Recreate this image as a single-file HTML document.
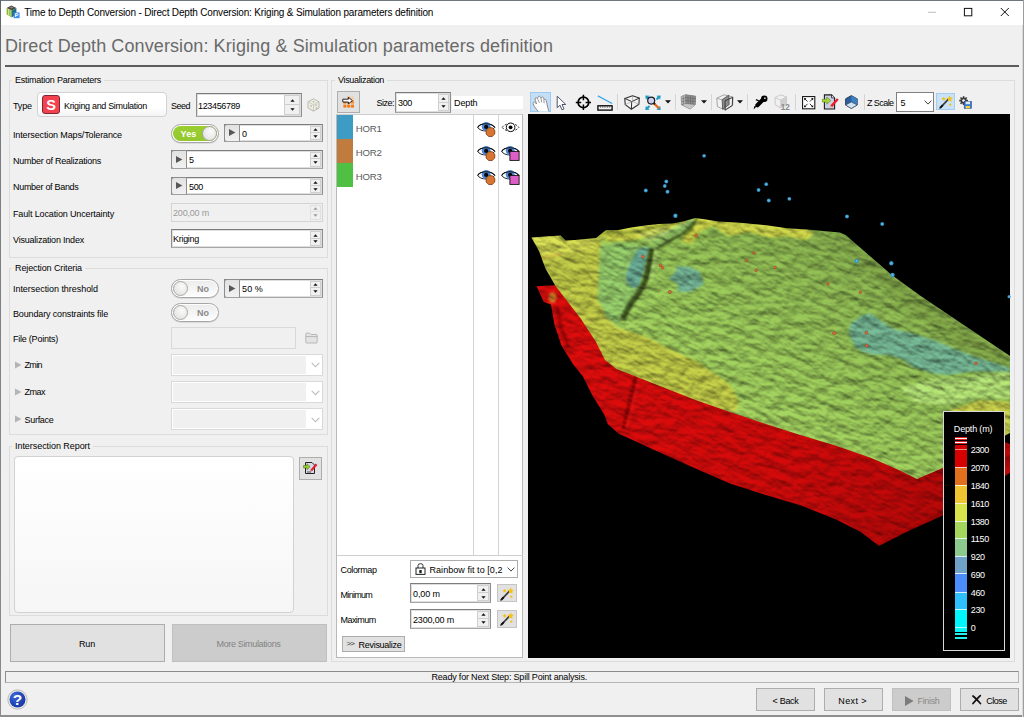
<!DOCTYPE html>
<html lang="en"><head><meta charset="utf-8"><title>Time to Depth Conversion</title>
<style>
html,body{margin:0;padding:0;}
body{width:1024px;height:717px;position:relative;overflow:hidden;background:#f0f0f0;font-family:"Liberation Sans",sans-serif;font-size:11px;}
.t{position:absolute;white-space:nowrap;}
.a{position:absolute;display:block;overflow:visible;}
</style></head><body>
<div style="position:absolute;left:0px;top:0px;width:1024px;height:717px;box-sizing:border-box;background:#f0f0f0;"></div>
<div style="position:absolute;left:0px;top:0px;width:1024px;height:25px;box-sizing:border-box;background:#fff;"></div>
<div style="position:absolute;left:0px;top:0px;width:1024px;height:1px;box-sizing:border-box;background:#6e7780;"></div>
<div style="position:absolute;left:0px;top:0px;width:1px;height:717px;box-sizing:border-box;background:linear-gradient(#5f6468,#7a7e82 20%,#8a8a8a);"></div>
<div style="position:absolute;left:0px;top:715.4px;width:1024px;height:1.6px;box-sizing:border-box;background:#8e8e8e;"></div>
<div style="position:absolute;left:1022px;top:25px;width:1px;height:692px;box-sizing:border-box;background:#dadada;"></div>
<div style="position:absolute;left:1023px;top:0px;width:1px;height:717px;box-sizing:border-box;background:#9a9ea2;"></div>
<svg class="a" style="left:6.3px;top:5px" width="14" height="14" viewBox="0 0 14 14">
<polygon points="0.6,3 5.4,0.4 10.4,3 5.6,5.4" fill="#4b4641"/><polygon points="3.4,2.6 5.6,1.4 7.6,2.6 5.6,3.6" fill="#8a8680"/>
<polygon points="0.6,3 5.6,5.4 5.6,12.4 0.6,9.6" fill="#8ebb2e"/><polygon points="2.2,3.8 3.2,4.3 3.2,11 2.2,10.5" fill="#dfe8c8"/><polygon points="4,4.7 4.8,5.1 4.8,11.9 4,11.5" fill="#b7d65a"/>
<polygon points="5.6,5.4 10.4,3 10.4,9.6 5.6,12.4" fill="#1f6f7f"/>
<rect x="7.6" y="7.4" width="6" height="5.8" fill="#3c8cf2"/><path d="M9.6 12v-3.4h1.6q0.9 0 0.9 0.9t-0.9 0.9h-1.6" stroke="#fff" stroke-width="0.9" fill="none"/></svg>
<span class="t" style="left:24.2px;top:6.2px;font-size:10px;line-height:13px;color:#000;letter-spacing:-0.174px;">Time to Depth Conversion - Direct Depth Conversion: Kriging &amp; Simulation parameters definition</span>
<svg class="a" style="left:920px;top:0" width="104" height="25" viewBox="0 0 104 25">
<path d="M8 12.3h8" stroke="#bdbdbd" stroke-width="1" fill="none"/>
<rect x="44.4" y="8.4" width="7.4" height="7.4" stroke="#111" stroke-width="1" fill="none"/>
<path d="M80.8 8l8 8M88.8 8l-8 8" stroke="#111" stroke-width="1" fill="none"/></svg>
<span class="t" style="left:5px;top:35.0px;font-size:18px;line-height:22px;color:#6a6a6a;letter-spacing:0.101px;">Direct Depth Conversion: Kriging &amp; Simulation parameters definition</span>
<div style="position:absolute;left:5px;top:65px;width:1014px;height:2px;box-sizing:border-box;background:#5c5c5c;"></div>
<div style="position:absolute;left:9px;top:80px;width:319px;height:178px;box-sizing:border-box;border:1px solid #dcdcdc;"></div><div style="position:absolute;left:12px;top:78px;width:92px;height:5px;box-sizing:border-box;background:#f0f0f0;"></div><span class="t" style="left:15px;top:74.3px;font-size:9px;line-height:12px;color:#000;letter-spacing:-0.240px;">Estimation Parameters</span>
<div style="position:absolute;left:9px;top:268px;width:319px;height:167px;box-sizing:border-box;border:1px solid #dcdcdc;"></div><div style="position:absolute;left:12px;top:266px;width:73px;height:5px;box-sizing:border-box;background:#f0f0f0;"></div><span class="t" style="left:15px;top:262.3px;font-size:9px;line-height:12px;color:#000;letter-spacing:-0.113px;">Rejection Criteria</span>
<div style="position:absolute;left:9px;top:446px;width:319px;height:170px;box-sizing:border-box;border:1px solid #dcdcdc;"></div><div style="position:absolute;left:12px;top:444px;width:81px;height:5px;box-sizing:border-box;background:#f0f0f0;"></div><span class="t" style="left:15px;top:440.3px;font-size:9px;line-height:12px;color:#000;letter-spacing:-0.055px;">Intersection Report</span>
<div style="position:absolute;left:331px;top:80px;width:684px;height:582px;box-sizing:border-box;border:1px solid #dcdcdc;"></div><div style="position:absolute;left:335px;top:78px;width:52px;height:5px;box-sizing:border-box;background:#f0f0f0;"></div><span class="t" style="left:338px;top:74.3px;font-size:9px;line-height:12px;color:#000;letter-spacing:-0.337px;">Visualization</span>
<span class="t" style="left:13px;top:99.5px;font-size:9px;line-height:12px;color:#000;letter-spacing:-0.129px;">Type</span>
<span class="t" style="left:13px;top:128.5px;font-size:9px;line-height:12px;color:#000;letter-spacing:-0.132px;">Intersection Maps/Tolerance</span>
<span class="t" style="left:13px;top:154.8px;font-size:9px;line-height:12px;color:#000;letter-spacing:-0.252px;">Number of Realizations</span>
<span class="t" style="left:13px;top:181.1px;font-size:9px;line-height:12px;color:#000;letter-spacing:-0.303px;">Number of Bands</span>
<span class="t" style="left:13px;top:207.5px;font-size:9px;line-height:12px;color:#000;letter-spacing:-0.137px;">Fault Location Uncertainty</span>
<span class="t" style="left:13px;top:233.8px;font-size:9px;line-height:12px;color:#000;letter-spacing:-0.205px;">Visualization Index</span>
<span class="t" style="left:13px;top:283.3px;font-size:9px;line-height:12px;color:#000;letter-spacing:-0.048px;">Intersection threshold</span>
<span class="t" style="left:13px;top:307.7px;font-size:9px;line-height:12px;color:#000;letter-spacing:-0.142px;">Boundary constraints file</span>
<span class="t" style="left:13px;top:333.0px;font-size:9px;line-height:12px;color:#000;letter-spacing:-0.232px;">File (Points)</span>
<svg class="a" style="left:15px;top:360.8px" width="7" height="8" viewBox="0 0 7 8"><polygon points="0,0.5 6.5,4 0,7.5" fill="#b4b4b4"/></svg>
<span class="t" style="left:24.5px;top:359.3px;font-size:9px;line-height:12px;color:#000;letter-spacing:-0.625px;">Zmin</span>
<svg class="a" style="left:15px;top:387.6px" width="7" height="8" viewBox="0 0 7 8"><polygon points="0,0.5 6.5,4 0,7.5" fill="#b4b4b4"/></svg>
<span class="t" style="left:24.5px;top:386.1px;font-size:9px;line-height:12px;color:#000;letter-spacing:-0.500px;">Zmax</span>
<svg class="a" style="left:15px;top:415.2px" width="7" height="8" viewBox="0 0 7 8"><polygon points="0,0.5 6.5,4 0,7.5" fill="#b4b4b4"/></svg>
<span class="t" style="left:24.5px;top:413.7px;font-size:9px;line-height:12px;color:#000;letter-spacing:-0.290px;">Surface</span>
<div style="position:absolute;left:37.4px;top:92.4px;width:129.4px;height:24.2px;box-sizing:border-box;background:linear-gradient(#fff 60%,#f4f4f4);border:1.4px solid #d2d2d2;border-radius:4px;"></div>
<div style="position:absolute;left:42px;top:95.3px;width:18.2px;height:18.3px;box-sizing:border-box;background:#f4414f;border:1px solid #7c2634;border-radius:3px;"></div>
<span class="t" style="left:46.2px;top:96.9px;font-size:14.5px;line-height:16px;color:#fff;letter-spacing:-0.272px;font-weight:bold;">S</span>
<span class="t" style="left:64px;top:99.5px;font-size:9px;line-height:12px;color:#000;letter-spacing:-0.321px;">Kriging and Simulation</span>
<span class="t" style="left:171px;top:99.5px;font-size:9px;line-height:12px;color:#000;letter-spacing:-0.508px;">Seed</span>
<div style="position:absolute;left:196px;top:93px;width:106px;height:23.5px;box-sizing:border-box;background:#fff;border:1px solid #8e8e8e;border-top-color:#7c7c7c;border-bottom-color:#a8a8a8;box-shadow:inset 0 0 0 1px #dedede;"></div><div style="position:absolute;left:284px;top:95px;width:16px;height:9.75px;box-sizing:border-box;background:#f0f0f0;border:1px solid #cfcfcf;"></div><div style="position:absolute;left:284px;top:104.75px;width:16px;height:9.75px;box-sizing:border-box;background:#f0f0f0;border:1px solid #cfcfcf;border-top:none;"></div><svg class="a" style="left:289.5px;top:98.5px" width="5" height="3.2" viewBox="0 0 6 4"><polygon points="0.3,3.6 3,0.4 5.7,3.6" fill="#111"/></svg><svg class="a" style="left:289.5px;top:107.8px" width="5" height="3.2" viewBox="0 0 6 4"><polygon points="0.3,0.4 3,3.6 5.7,0.4" fill="#111"/></svg><span class="t" style="left:198px;top:99.5px;font-size:9px;line-height:12px;color:#000;letter-spacing:-0.340px;">123456789</span>
<div style="position:absolute;left:224px;top:124px;width:99px;height:18px;box-sizing:border-box;background:#fff;border:1px solid #8e8e8e;border-top-color:#7c7c7c;border-bottom-color:#a8a8a8;box-shadow:inset 0 0 0 1px #dedede;"></div><div style="position:absolute;left:224px;top:124px;width:16px;height:18px;box-sizing:border-box;background:linear-gradient(#e2e2e2,#f1f1f1);border:1px solid #8e8e8e;border-radius:3px 0 0 3px;border-bottom-color:#a0a0a0;"></div><svg class="a" style="left:228.8px;top:129.4px" width="7" height="7" viewBox="0 0 7 7"><polygon points="0,0 6.4,3.5 0,7" fill="#565656"/></svg><div style="position:absolute;left:310px;top:126px;width:11px;height:7.0px;box-sizing:border-box;background:#f0f0f0;border:1px solid #cfcfcf;"></div><div style="position:absolute;left:310px;top:133.0px;width:11px;height:7.0px;box-sizing:border-box;background:#f0f0f0;border:1px solid #cfcfcf;border-top:none;"></div><svg class="a" style="left:313.0px;top:128.1px" width="5" height="3.2" viewBox="0 0 6 4"><polygon points="0.3,3.6 3,0.4 5.7,3.6" fill="#111"/></svg><svg class="a" style="left:313.0px;top:134.7px" width="5" height="3.2" viewBox="0 0 6 4"><polygon points="0.3,0.4 3,3.6 5.7,0.4" fill="#111"/></svg><span class="t" style="left:242px;top:127.8px;font-size:9px;line-height:12px;color:#000;letter-spacing:0.000px;">0</span>
<div style="position:absolute;left:171px;top:150px;width:152px;height:18.6px;box-sizing:border-box;background:#fff;border:1px solid #8e8e8e;border-top-color:#7c7c7c;border-bottom-color:#a8a8a8;box-shadow:inset 0 0 0 1px #dedede;"></div><div style="position:absolute;left:171px;top:150px;width:16px;height:18.6px;box-sizing:border-box;background:linear-gradient(#e2e2e2,#f1f1f1);border:1px solid #8e8e8e;border-radius:3px 0 0 3px;border-bottom-color:#a0a0a0;"></div><svg class="a" style="left:175.8px;top:155.7px" width="7" height="7" viewBox="0 0 7 7"><polygon points="0,0 6.4,3.5 0,7" fill="#565656"/></svg><div style="position:absolute;left:310px;top:152px;width:11px;height:7.300000000000001px;box-sizing:border-box;background:#f0f0f0;border:1px solid #cfcfcf;"></div><div style="position:absolute;left:310px;top:159.3px;width:11px;height:7.300000000000001px;box-sizing:border-box;background:#f0f0f0;border:1px solid #cfcfcf;border-top:none;"></div><svg class="a" style="left:313.0px;top:154.2px" width="5" height="3.2" viewBox="0 0 6 4"><polygon points="0.3,3.6 3,0.4 5.7,3.6" fill="#111"/></svg><svg class="a" style="left:313.0px;top:161.1px" width="5" height="3.2" viewBox="0 0 6 4"><polygon points="0.3,0.4 3,3.6 5.7,0.4" fill="#111"/></svg><span class="t" style="left:189px;top:154.1px;font-size:9px;line-height:12px;color:#000;letter-spacing:0.000px;">5</span>
<div style="position:absolute;left:171px;top:176.6px;width:152px;height:18.6px;box-sizing:border-box;background:#fff;border:1px solid #8e8e8e;border-top-color:#7c7c7c;border-bottom-color:#a8a8a8;box-shadow:inset 0 0 0 1px #dedede;"></div><div style="position:absolute;left:171px;top:176.6px;width:16px;height:18.6px;box-sizing:border-box;background:linear-gradient(#e2e2e2,#f1f1f1);border:1px solid #8e8e8e;border-radius:3px 0 0 3px;border-bottom-color:#a0a0a0;"></div><svg class="a" style="left:175.8px;top:182.3px" width="7" height="7" viewBox="0 0 7 7"><polygon points="0,0 6.4,3.5 0,7" fill="#565656"/></svg><div style="position:absolute;left:310px;top:178.6px;width:11px;height:7.300000000000001px;box-sizing:border-box;background:#f0f0f0;border:1px solid #cfcfcf;"></div><div style="position:absolute;left:310px;top:185.9px;width:11px;height:7.300000000000001px;box-sizing:border-box;background:#f0f0f0;border:1px solid #cfcfcf;border-top:none;"></div><svg class="a" style="left:313.0px;top:180.8px" width="5" height="3.2" viewBox="0 0 6 4"><polygon points="0.3,3.6 3,0.4 5.7,3.6" fill="#111"/></svg><svg class="a" style="left:313.0px;top:187.7px" width="5" height="3.2" viewBox="0 0 6 4"><polygon points="0.3,0.4 3,3.6 5.7,0.4" fill="#111"/></svg><span class="t" style="left:189px;top:180.7px;font-size:9px;line-height:12px;color:#000;letter-spacing:-0.344px;">500</span>
<div style="position:absolute;left:171px;top:203px;width:152px;height:18.6px;box-sizing:border-box;background:#f0f0f0;border:1px solid #d4d4d4;"></div><div style="position:absolute;left:310px;top:205px;width:11px;height:7.300000000000001px;box-sizing:border-box;background:#f0f0f0;border:1px solid #e0e0e0;"></div><div style="position:absolute;left:310px;top:212.3px;width:11px;height:7.300000000000001px;box-sizing:border-box;background:#f0f0f0;border:1px solid #e0e0e0;border-top:none;"></div><svg class="a" style="left:313.0px;top:207.2px" width="5" height="3.2" viewBox="0 0 6 4"><polygon points="0.3,3.6 3,0.4 5.7,3.6" fill="#9a9a9a"/></svg><svg class="a" style="left:313.0px;top:214.1px" width="5" height="3.2" viewBox="0 0 6 4"><polygon points="0.3,0.4 3,3.6 5.7,0.4" fill="#9a9a9a"/></svg><span class="t" style="left:173px;top:207.1px;font-size:9px;line-height:12px;color:#9a9a9a;letter-spacing:-0.191px;">200,00 m</span>
<div style="position:absolute;left:171px;top:229.3px;width:152px;height:18.6px;box-sizing:border-box;background:#fff;border:1px solid #8e8e8e;border-top-color:#7c7c7c;border-bottom-color:#a8a8a8;box-shadow:inset 0 0 0 1px #dedede;"></div><div style="position:absolute;left:310px;top:231.3px;width:11px;height:7.300000000000001px;box-sizing:border-box;background:#f0f0f0;border:1px solid #cfcfcf;"></div><div style="position:absolute;left:310px;top:238.60000000000002px;width:11px;height:7.300000000000001px;box-sizing:border-box;background:#f0f0f0;border:1px solid #cfcfcf;border-top:none;"></div><svg class="a" style="left:313.0px;top:233.6px" width="5" height="3.2" viewBox="0 0 6 4"><polygon points="0.3,3.6 3,0.4 5.7,3.6" fill="#111"/></svg><svg class="a" style="left:313.0px;top:240.4px" width="5" height="3.2" viewBox="0 0 6 4"><polygon points="0.3,0.4 3,3.6 5.7,0.4" fill="#111"/></svg><span class="t" style="left:173px;top:233.4px;font-size:9px;line-height:12px;color:#000;letter-spacing:-0.288px;">Kriging</span>
<div style="position:absolute;left:224px;top:279px;width:99px;height:18.6px;box-sizing:border-box;background:#fff;border:1px solid #8e8e8e;border-top-color:#7c7c7c;border-bottom-color:#a8a8a8;box-shadow:inset 0 0 0 1px #dedede;"></div><div style="position:absolute;left:224px;top:279px;width:16px;height:18.6px;box-sizing:border-box;background:linear-gradient(#e2e2e2,#f1f1f1);border:1px solid #8e8e8e;border-radius:3px 0 0 3px;border-bottom-color:#a0a0a0;"></div><svg class="a" style="left:228.8px;top:284.7px" width="7" height="7" viewBox="0 0 7 7"><polygon points="0,0 6.4,3.5 0,7" fill="#565656"/></svg><div style="position:absolute;left:310px;top:281px;width:11px;height:7.300000000000001px;box-sizing:border-box;background:#f0f0f0;border:1px solid #cfcfcf;"></div><div style="position:absolute;left:310px;top:288.3px;width:11px;height:7.300000000000001px;box-sizing:border-box;background:#f0f0f0;border:1px solid #cfcfcf;border-top:none;"></div><svg class="a" style="left:313.0px;top:283.2px" width="5" height="3.2" viewBox="0 0 6 4"><polygon points="0.3,3.6 3,0.4 5.7,3.6" fill="#111"/></svg><svg class="a" style="left:313.0px;top:290.1px" width="5" height="3.2" viewBox="0 0 6 4"><polygon points="0.3,0.4 3,3.6 5.7,0.4" fill="#111"/></svg><span class="t" style="left:242px;top:283.1px;font-size:9px;line-height:12px;color:#000;letter-spacing:0.121px;">50 %</span>
<svg class="a" style="left:307px;top:97.5px" width="13" height="14" viewBox="0 0 13 14">
<polygon points="6.5,0.8 12,3.8 12,10 6.5,13.2 1,10 1,3.8" fill="#ecece0" stroke="#b9b9b0" stroke-width="1"/>
<path d="M6.5 6.8V13M1 3.8l5.5 3 5.5-3" stroke="#c4c4ba" fill="none" stroke-width="0.8"/>
<circle cx="4" cy="8" r="0.8" fill="#aaa"/><circle cx="9" cy="7" r="0.8" fill="#aaa"/><circle cx="9.5" cy="10" r="0.8" fill="#aaa"/><circle cx="6.5" cy="3.8" r="0.8" fill="#aaa"/></svg>
<div style="position:absolute;left:171px;top:123.7px;width:48px;height:19px;box-sizing:border-box;border-radius:10px;border:1px solid #a6a6a6;background:#fff;box-shadow:0 1px 0 #dcdcdc;"></div><div style="position:absolute;left:173px;top:125.7px;width:44px;height:15px;box-sizing:border-box;border-radius:8px;background:linear-gradient(#9bcf30,#94c72e);"></div><div style="position:absolute;left:201.5px;top:125.7px;width:15.4px;height:15.4px;box-sizing:border-box;border-radius:50%;border:1px solid #a9a9a0;background:radial-gradient(circle at 60% 35%,#fbfbfb,#dcdcdc);"></div><span class="t" style="left:180.5px;top:127.9px;font-size:9px;line-height:12px;color:#fff;letter-spacing:0.156px;font-weight:bold;">Yes</span>
<div style="position:absolute;left:171px;top:278.7px;width:48px;height:19px;box-sizing:border-box;border-radius:10px;border:1px solid #a6a6a6;background:#fff;box-shadow:0 1px 0 #dcdcdc;"></div><div style="position:absolute;left:173px;top:280.7px;width:44px;height:15px;box-sizing:border-box;border-radius:8px;background:linear-gradient(#ececec,#fdfdfd);"></div><div style="position:absolute;left:173px;top:280.7px;width:15.4px;height:15.4px;box-sizing:border-box;border-radius:50%;border:1px solid #a9a9a0;background:radial-gradient(circle at 60% 35%,#fbfbfb,#dcdcdc);"></div><span class="t" style="left:197px;top:282.9px;font-size:9px;line-height:12px;color:#8a8a8a;letter-spacing:0.000px;font-weight:bold;">No</span>
<div style="position:absolute;left:171px;top:302.7px;width:48px;height:19px;box-sizing:border-box;border-radius:10px;border:1px solid #a6a6a6;background:#fff;box-shadow:0 1px 0 #dcdcdc;"></div><div style="position:absolute;left:173px;top:304.7px;width:44px;height:15px;box-sizing:border-box;border-radius:8px;background:linear-gradient(#ececec,#fdfdfd);"></div><div style="position:absolute;left:173px;top:304.7px;width:15.4px;height:15.4px;box-sizing:border-box;border-radius:50%;border:1px solid #a9a9a0;background:radial-gradient(circle at 60% 35%,#fbfbfb,#dcdcdc);"></div><span class="t" style="left:197px;top:306.9px;font-size:9px;line-height:12px;color:#8a8a8a;letter-spacing:0.000px;font-weight:bold;">No</span>
<div style="position:absolute;left:171px;top:326.5px;width:125px;height:22.5px;box-sizing:border-box;background:#f0f0f0;border:1px solid #d9d9d9;"></div>
<svg class="a" style="left:305px;top:332px" width="13" height="12" viewBox="0 0 13 12">
<path d="M0.8 2.2q0-1 1-1h3l1.2 1.3h5.2q1 0 1 1V10q0 1-1 1H1.8q-1 0-1-1z" fill="#e4e4e4" stroke="#b0b0b0" stroke-width="0.9"/>
<path d="M0.8 4.6h11.4" stroke="#b0b0b0" stroke-width="0.9"/></svg>
<div style="position:absolute;left:171px;top:353.6px;width:152px;height:22.6px;box-sizing:border-box;background:#fff;border:1px solid #d9d9d9;"></div><div style="position:absolute;left:173px;top:355.6px;width:133px;height:18.6px;box-sizing:border-box;background:#f0f0f0;"></div><svg class="a" style="left:311px;top:362.4px" width="9" height="6" viewBox="0 0 9 6"><path d="M0.7 0.8l3.8 3.9 3.8-3.9" stroke="#bdbdbd" stroke-width="1.1" fill="none"/></svg>
<div style="position:absolute;left:171px;top:380.8px;width:152px;height:22.4px;box-sizing:border-box;background:#fff;border:1px solid #d9d9d9;"></div><div style="position:absolute;left:173px;top:382.8px;width:133px;height:18.4px;box-sizing:border-box;background:#f0f0f0;"></div><svg class="a" style="left:311px;top:389.5px" width="9" height="6" viewBox="0 0 9 6"><path d="M0.7 0.8l3.8 3.9 3.8-3.9" stroke="#bdbdbd" stroke-width="1.1" fill="none"/></svg>
<div style="position:absolute;left:171px;top:408px;width:152px;height:22.4px;box-sizing:border-box;background:#fff;border:1px solid #d9d9d9;"></div><div style="position:absolute;left:173px;top:410px;width:133px;height:18.4px;box-sizing:border-box;background:#f0f0f0;"></div><svg class="a" style="left:311px;top:416.7px" width="9" height="6" viewBox="0 0 9 6"><path d="M0.7 0.8l3.8 3.9 3.8-3.9" stroke="#bdbdbd" stroke-width="1.1" fill="none"/></svg>
<div style="position:absolute;left:14px;top:456px;width:280px;height:157px;box-sizing:border-box;border:1px solid #d2d2d2;border-radius:4px;background:linear-gradient(#ffffff,#f6f6f6);"></div>
<div style="position:absolute;left:299px;top:456.5px;width:23px;height:23px;box-sizing:border-box;background:#e1e1e1;border:1px solid #adadad;"></div>
<svg class="a" style="left:303px;top:460px" width="16" height="16" viewBox="0 0 16 16">
<path d="M2.5 2.5h6.5l2.5 2.5v8.5h-9z" fill="#d8d8ee" stroke="#222" stroke-width="1"/>
<path d="M0.5 5.5h3.5v-1.8l3.2 3-3.2 3v-1.8h-3.5z" fill="#9acd32" stroke="#4d7a10" stroke-width="0.6"/>
<path d="M13.6 4.2l-5.6 6.6" stroke="#e3202c" stroke-width="2.1"/><path d="M7.4 11.6l0.9-1.3 0.7 0.6z" fill="#f0b000"/>
<path d="M4 12h4" stroke="#333" stroke-width="0.8"/></svg>
<div style="position:absolute;left:10px;top:624px;width:155px;height:37.5px;box-sizing:border-box;background:#e1e1e1;border:1px solid #adadad;"></div>
<span class="t" style="left:79px;top:637.7px;font-size:9px;line-height:12px;color:#000;letter-spacing:-0.172px;">Run</span>
<div style="position:absolute;left:172px;top:624px;width:155px;height:37.5px;box-sizing:border-box;background:#cccccc;border:1px solid #bfbfbf;"></div>
<span class="t" style="left:216.5px;top:637.7px;font-size:9px;line-height:12px;color:#838383;letter-spacing:-0.346px;">More Simulations</span>
<div style="position:absolute;left:5px;top:671px;width:1014px;height:11.5px;box-sizing:border-box;background:#f0f0f0;border:1px solid #8c8c8c;border-bottom-color:#b5b5b5;border-right-color:#b5b5b5;"></div>
<span class="t" style="left:431.5px;top:671.0px;font-size:9px;line-height:12px;color:#000;letter-spacing:-0.192px;">Ready for Next Step: Spill Point analysis.</span>
<svg class="a" style="left:6.5px;top:688.8px" width="21" height="21" viewBox="0 0 21 21">
<defs><radialGradient id="hg" cx="0.35" cy="0.3" r="0.85"><stop offset="0" stop-color="#3f68d8"/><stop offset="0.6" stop-color="#1f45b4"/><stop offset="1" stop-color="#17389c"/></radialGradient></defs>
<circle cx="10.5" cy="10.5" r="9.7" fill="#e9e9e9" stroke="#b4b4b4" stroke-width="0.9"/>
<circle cx="10.5" cy="10.5" r="8" fill="url(#hg)"/>
<text x="10.5" y="16" text-anchor="middle" font-family="Liberation Sans, sans-serif" font-weight="bold" font-size="15.5" fill="#fff">?</text></svg>
<div style="position:absolute;left:756px;top:688px;width:59px;height:23px;box-sizing:border-box;background:#e1e1e1;border:1px solid #adadad;"></div>
<span class="t" style="left:772.5px;top:694.8px;font-size:9px;line-height:12px;color:#000;letter-spacing:-0.294px;">&lt; Back</span>
<div style="position:absolute;left:824px;top:688px;width:59px;height:23px;box-sizing:border-box;background:#e1e1e1;border:1px solid #adadad;"></div>
<span class="t" style="left:838.3px;top:694.8px;font-size:9px;line-height:12px;color:#000;letter-spacing:0.372px;">Next &gt;</span>
<div style="position:absolute;left:892px;top:688px;width:59px;height:23px;box-sizing:border-box;background:#cccccc;border:1px solid #bfbfbf;"></div>
<span class="t" style="left:917.5px;top:694.8px;font-size:9px;line-height:12px;color:#8a8a8a;letter-spacing:-0.336px;">Finish</span>
<svg class="a" style="left:905px;top:695.5px" width="9" height="10" viewBox="0 0 9 10"><polygon points="0,0 8.6,5 0,10" fill="#7c7c7c"/></svg>
<div style="position:absolute;left:960px;top:688px;width:58.5px;height:23px;box-sizing:border-box;background:#e1e1e1;border:1px solid #adadad;"></div>
<span class="t" style="left:986.3px;top:694.8px;font-size:9px;line-height:12px;color:#000;letter-spacing:-0.503px;">Close</span>
<svg class="a" style="left:971.6px;top:695.3px" width="9.6" height="9.4" viewBox="0 0 11 11">
<path d="M1 1.2C4 3.5 7 7 9.8 10M9.6 0.8C7 3.2 4 6.6 1 10" stroke="#111" stroke-width="2" fill="none" stroke-linecap="round"/></svg>
<div style="position:absolute;left:337px;top:91.3px;width:22.5px;height:21.5px;box-sizing:border-box;background:#e1e1e1;border:1px solid #adadad;"></div>
<svg class="a" style="left:341.5px;top:95.5px" width="14" height="13" viewBox="0 0 14 13">
<g fill="#f47a12"><rect x="5.2" y="0.6" width="3" height="3" fill="#f9b27a"/><rect x="9" y="0.6" width="3" height="3" fill="#fbc9a0"/>
<rect x="1.4" y="4.6" width="3" height="3"/><rect x="5.2" y="4.6" width="3" height="3"/><rect x="9" y="4.6" width="3" height="3" fill="#f58a30"/>
<rect x="1.4" y="8.6" width="3" height="3"/><rect x="5.2" y="8.6" width="3" height="3"/><rect x="9" y="8.6" width="3" height="3"/></g>
<path d="M0.8 3.2h5.6v-1.9l4 3.3-4 3.3v-1.9h-5.6z" fill="#fff" stroke="#111" stroke-width="0.9" stroke-linejoin="round"/></svg>
<span class="t" style="left:376.6px;top:96.5px;font-size:9px;line-height:12px;color:#000;letter-spacing:-0.503px;">Size:</span>
<div style="position:absolute;left:395.2px;top:92px;width:55.6px;height:21px;box-sizing:border-box;background:#fff;border:1px solid #8e8e8e;border-top-color:#7c7c7c;border-bottom-color:#a8a8a8;box-shadow:inset 0 0 0 1px #dedede;"></div>
<div style="position:absolute;left:437.5px;top:94px;width:11.5px;height:8.5px;box-sizing:border-box;background:#f0f0f0;border:1px solid #cfcfcf;"></div>
<div style="position:absolute;left:437.5px;top:102.5px;width:11.5px;height:8.5px;box-sizing:border-box;background:#f0f0f0;border:1px solid #cfcfcf;border-top:none;"></div>
<svg class="a" style="left:440.8px;top:96.8px" width="5" height="3.2" viewBox="0 0 6 4"><polygon points="0.3,3.6 3,0.4 5.7,3.6" fill="#111"/></svg>
<svg class="a" style="left:440.8px;top:105px" width="5" height="3.2" viewBox="0 0 6 4"><polygon points="0.3,0.4 3,3.6 5.7,0.4" fill="#111"/></svg>
<span class="t" style="left:398px;top:96.5px;font-size:9px;line-height:12px;color:#000;letter-spacing:-0.344px;">300</span>
<div style="position:absolute;left:451.6px;top:95.5px;width:71px;height:13px;box-sizing:border-box;background:#fff;"></div>
<span class="t" style="left:454px;top:96.5px;font-size:9px;line-height:12px;color:#000;letter-spacing:-0.106px;">Depth</span>
<div style="position:absolute;left:529.7px;top:91.8px;width:21.3px;height:20px;box-sizing:border-box;background:#c3def5;border:1px solid #9ccaf0;"></div>
<svg class="a" style="left:532px;top:94.5px" width="18" height="17" viewBox="0 0 18 17">
<path d="M6.2 16.5C3.6 13 1.2 10.6 1.1 8.4c0-1.3 1.3-1.8 2.3-0.6L4.6 9C3.9 6.6 2.6 4 3.3 3c0.7-0.9 1.8-0.3 2.3 0.9 0.2-1.5 0.6-2.7 1.7-2.7 1 0 1.4 1 1.6 2.3 0.4-1 1-1.7 1.9-1.4 1 0.3 1.1 1.6 1.2 2.9 0.5-0.6 1.2-0.8 1.8-0.3 0.8 0.8 1 3.6 1.6 6.3 0.4 2 0.9 3.6 1.6 5.5" fill="#fff" stroke="#8a8a8a" stroke-width="1" stroke-linejoin="round"/>
<path d="M5.8 4.2l1.5 3.6M9 3.6l0.8 3.8M11.9 5.2l0.3 3" stroke="#8a8a8a" stroke-width="0.9" fill="none"/></svg>
<svg class="a" style="left:556px;top:94.5px" width="11" height="16" viewBox="0 0 11 16">
<path d="M1.2 1.2v11.6l2.8-2.6 2 4.6 2-0.9-2-4.4h3.8z" fill="#fff" stroke="#4e5670" stroke-width="1" stroke-linejoin="round"/></svg>
<svg class="a" style="left:575px;top:94px" width="17" height="17" viewBox="0 0 17 17">
<circle cx="8.4" cy="8.4" r="5.3" fill="none" stroke="#000" stroke-width="1.7"/>
<path d="M8.4 0.8v5.4M8.4 10.6v5.4M0.8 8.4h5.4M10.6 8.4h5.4" stroke="#000" stroke-width="1.5"/></svg>
<svg class="a" style="left:596.5px;top:94.5px" width="16" height="16" viewBox="0 0 16 16">
<path d="M0.8 0.9l14.4 7.6" stroke="#39a9ea" stroke-width="1.3"/>
<rect x="0.9" y="10.8" width="14.2" height="4.3" fill="#f2f2f2" stroke="#000" stroke-width="1.3"/>
<path d="M3.5 11.2v1.6M5.8 11.2v1.6M8 11.2v1.6M10.3 11.2v1.6M12.6 11.2v1.6" stroke="#444" stroke-width="0.7"/></svg>
<div style="position:absolute;left:617px;top:94px;width:1px;height:16px;box-sizing:border-box;background:#d4d4d4;"></div>
<svg class="a" style="left:623.5px;top:94.5px" width="16" height="15" viewBox="0 0 16 15">
<path d="M0.8 3.4L8.5 0.8l6.8 2.3-0.4 6.2-7.5 4.9-6.2-4.6z" fill="#f3f3f3" stroke="#333" stroke-width="1.1" stroke-linejoin="round"/>
<path d="M0.8 3.4l6.9 3.2 7.6-3.5M7.7 6.6l-0.3 7.6" stroke="#333" stroke-width="1" fill="none"/>
<path d="M1.2 9.6l7.4-3.2 6.3 2.9M8.6 6.4l-0.1-5.4" stroke="#9a9a9a" stroke-width="0.6" fill="none"/></svg>
<svg class="a" style="left:644.5px;top:94.5px" width="16" height="15.5" viewBox="0 0 16 15.5">
<g fill="#1a9cc6"><polygon points="0.3,0.4 4.6,0.8 3.4,2 5.2,3.8 3.8,5.2 2,3.4 0.8,4.6"/><polygon points="15.7,0.4 11.4,0.8 12.6,2 10.8,3.8 12.2,5.2 14,3.4 15.2,4.6"/>
<polygon points="0.3,15.1 4.6,14.7 3.4,13.5 5.2,11.7 3.8,10.3 2,12.1 0.8,10.9"/><polygon points="15.7,15.1 11.4,14.7 12.6,13.5 14,12.1 15.2,10.9"/></g>
<path d="M8.3 7.8l5 5" stroke="#e8641a" stroke-width="2.3" stroke-linecap="round"/><path d="M8.6 8l1.3 1.3" stroke="#222" stroke-width="2"/>
<circle cx="6.2" cy="5.6" r="3.5" fill="#cfcff4" stroke="#1a1a1a" stroke-width="1.2"/></svg>
<svg class="a" style="left:665px;top:100.3px" width="6" height="4" viewBox="0 0 6 4"><polygon points="0,0.2 6,0.2 3,3.6" fill="#111"/></svg>
<div style="position:absolute;left:675px;top:94px;width:1px;height:16px;box-sizing:border-box;background:#d4d4d4;"></div>
<svg class="a" style="left:680px;top:94px" width="17" height="16" viewBox="0 0 17 16">
<polygon points="1.2,2.6 5.6,0.8 15.6,2.2 15.2,10.6 10.2,15 1.6,10.8" fill="#a9a9a9" stroke="#6a6a6a" stroke-width="0.8"/>
<polygon points="5.6,0.8 15.6,2.2 15.2,10.6 5.8,9.4" fill="#8f8f8f"/>
<polygon points="1.2,2.6 5.6,0.8 5.8,9.4 1.6,10.8" fill="#b9b9b9"/>
<polygon points="1.6,10.8 5.8,9.4 15.2,10.6 10.2,15" fill="#c4c4c4"/>
<path d="M5.6 0.8l0.2 8.6M1.6 10.8l4.2-1.4 9.4 1.2M8 1.2l0.1 8.5M10.5 1.5v8.5M13 1.9l-0.1 8.4M5.7 3.6l9.8 1.2M5.7 6.4l9.6 1.2M3.2 1.8l0.3 8.4M1.3 5.3l4.4-1.6M1.4 8l4.4-1.5" stroke="#5c5c5c" stroke-width="0.5" fill="none"/></svg>
<svg class="a" style="left:701px;top:100.3px" width="6" height="4" viewBox="0 0 6 4"><polygon points="0,0.2 6,0.2 3,3.6" fill="#111"/></svg>
<div style="position:absolute;left:711px;top:94px;width:1px;height:16px;box-sizing:border-box;background:#d4d4d4;"></div>
<svg class="a" style="left:715.5px;top:93.5px" width="18" height="17" viewBox="0 0 18 17">
<path d="M0.8 4.2L8 0.8l9 2.2-0.4 8.6-7.4 4.6-7.8-3.6z" fill="#f1f1f1" stroke="#9c9c9c" stroke-width="0.9" stroke-linejoin="round"/>
<path d="M0.8 4.2l8 2.6 8.2-3.8M8.8 6.8l0.4 9.4" stroke="#9c9c9c" stroke-width="0.8" fill="none"/>
<polygon points="6.2,5.6 12.8,1.2 13.2,10.6 6.6,15.2" fill="#8c8c8c" stroke="#4a4a4a" stroke-width="0.8"/>
<path d="M9 6.8l7.6-3.4-0.3 8-7.2 4.6z" fill="none" stroke="#3a3a3a" stroke-width="1"/></svg>
<svg class="a" style="left:737px;top:100.3px" width="6" height="4" viewBox="0 0 6 4"><polygon points="0,0.2 6,0.2 3,3.6" fill="#111"/></svg>
<div style="position:absolute;left:747px;top:94px;width:1px;height:16px;box-sizing:border-box;background:#d4d4d4;"></div>
<svg class="a" style="left:752.5px;top:94.5px" width="15" height="15" viewBox="0 0 15 15">
<path d="M4.4 10.2L10.6 4" stroke="#000" stroke-width="4.2" stroke-linecap="round"/>
<circle cx="11.3" cy="3.7" r="3.2" fill="#000"/><circle cx="11.9" cy="3.2" r="0.9" fill="#c8c8c8"/>
<path d="M4 11l-3.4 3.6 0.6-3.4z" fill="#000"/><path d="M3 4.6l3 1.4" stroke="#000" stroke-width="1.3"/></svg>
<svg class="a" style="left:774px;top:93.5px" width="16" height="16" viewBox="0 0 16 16">
<polygon points="1,3.6 6.6,0.8 12.6,3 12.4,10.6 6.8,14 1.2,10.8" fill="#f0f0f0" stroke="#c4c4c4" stroke-width="0.9"/>
<polygon points="6.8,6 12.6,3 12.4,10.6 6.8,14" fill="#cfcfcf"/>
<path d="M1 3.6l5.8 2.4 5.8-3M6.8 6v8" stroke="#c4c4c4" stroke-width="0.8" fill="none"/>
<text x="6.8" y="15.6" font-family="Liberation Sans, sans-serif" font-weight="bold" font-size="8.2" fill="#8a8a8a">12</text></svg>
<div style="position:absolute;left:795px;top:94px;width:1px;height:16px;box-sizing:border-box;background:#d4d4d4;"></div>
<svg class="a" style="left:801.8px;top:95.6px" width="13.4" height="13.4" viewBox="0 0 14 14">
<rect x="0.6" y="0.6" width="12.8" height="12.8" fill="#fff" stroke="#111" stroke-width="1.1"/>
<path d="M2.8 2.8l3 3M11.2 2.8l-3 3M2.8 11.2l3-3M11.2 11.2l-3-3" stroke="#111" stroke-width="0.9"/>
<polygon points="2.2,2.2 4.6,2.4 2.4,4.6" fill="#111"/><polygon points="11.8,2.2 9.4,2.4 11.6,4.6" fill="#111"/><polygon points="2.2,11.8 4.6,11.6 2.4,9.4" fill="#111"/><polygon points="11.8,11.8 9.4,11.6 11.6,9.4" fill="#111"/></svg>
<svg class="a" style="left:821.5px;top:94px" width="17" height="16" viewBox="0 0 17 16">
<path d="M2.4 0.9h7.2l3 3V15H2.4z" fill="#cdcdea" stroke="#1c1c1c" stroke-width="1.1"/><path d="M9.6 0.9v3h3" fill="#f4f4ff" stroke="#1c1c1c" stroke-width="0.8"/>
<path d="M0.4 5.2h4.4v-2.2l4 3.6-4 3.6v-2.2h-4.4z" fill="#a4d83a" stroke="#5c8a14" stroke-width="0.6"/>
<path d="M15.8 5l-6.6 7.4" stroke="#ee1c2a" stroke-width="2.4"/><path d="M8.2 13.6l0.8-1.7 1.1 1z" fill="#f5b800"/></svg>
<svg class="a" style="left:844.5px;top:95.3px" width="13" height="14" viewBox="0 0 13 14">
<polygon points="6.3,0.6 12.2,3.8 12.2,10 6.3,13.4 0.6,10 0.6,3.8" fill="#2c5f9e" stroke="#27364a" stroke-width="0.9"/>
<polygon points="6.3,0.6 12.2,3.8 12.2,10 6.3,7" fill="#3d7fc0"/>
<polygon points="6.3,7 12.2,10 6.3,13.4 0.6,10" fill="#cfe3f2" stroke="#27364a" stroke-width="0.5"/></svg>
<div style="position:absolute;left:864px;top:94px;width:1px;height:16px;box-sizing:border-box;background:#d4d4d4;"></div>
<span class="t" style="left:867px;top:96.7px;font-size:9px;line-height:12px;color:#000;letter-spacing:-0.574px;">Z Scale</span>
<div style="position:absolute;left:896.3px;top:92px;width:38.2px;height:20.4px;box-sizing:border-box;background:#fff;border:1px solid #7f7f7f;"></div>
<span class="t" style="left:900.5px;top:96.7px;font-size:9px;line-height:12px;color:#000;letter-spacing:0.000px;">5</span>
<svg class="a" style="left:923.5px;top:100px" width="8" height="5" viewBox="0 0 8 5"><path d="M0.6 0.6l3.4 3.5 3.4-3.5" stroke="#444" stroke-width="1" fill="none"/></svg>
<div style="position:absolute;left:936.4px;top:93px;width:18.4px;height:17px;box-sizing:border-box;background:#c9e2f7;border:1px solid #a5cdf0;"></div>
<svg class="a" style="left:938.8px;top:94.6px" width="14" height="14" viewBox="0 0 14 14">
<path d="M1 13l8-8.4" stroke="#3a3a3a" stroke-width="1.7" stroke-linecap="round"/><path d="M1.4 12.6l2.4-2.5" stroke="#111" stroke-width="1.9"/>
<g fill="#f2c21a"><polygon points="10.6,0.4 11.6,2.6 13.8,3 12.2,4.6 12.6,6.8 10.6,5.7 8.7,6.6 9.1,4.6 7.6,3 9.7,2.6"/>
<polygon points="4.6,1.6 5.3,3 6.8,3.2 5.7,4.2 6,5.6 4.6,5 3.3,5.6 3.6,4.2 2.5,3.2 4,3"/><polygon points="11.3,8 11.8,9 12.9,9.2 12.1,9.9 12.3,11 11.3,10.5 10.3,11 10.5,9.9 9.7,9.2 10.8,9"/></g></svg>
<svg class="a" style="left:959px;top:96px" width="13" height="13" viewBox="0 0 13 13">
<g fill="#3c3c3c"><circle cx="4.6" cy="4.6" r="3.1"/><rect x="3.8" y="0.2" width="1.6" height="8.8"/><rect x="0.2" y="3.8" width="8.8" height="1.6"/>
<rect x="3.8" y="0.2" width="1.6" height="8.8" transform="rotate(45 4.6 4.6)"/><rect x="3.8" y="0.2" width="1.6" height="8.8" transform="rotate(-45 4.6 4.6)"/></g>
<circle cx="4.6" cy="4.6" r="1.4" fill="#f0f0f0"/>
<rect x="5.2" y="5.4" width="7.2" height="7" fill="#3b7bd0" stroke="#244e8c" stroke-width="0.6"/><rect x="6.6" y="5.6" width="4.4" height="2.6" fill="#dfe9f7"/><rect x="6.6" y="10" width="4.4" height="2.4" fill="#f0d24a"/></svg>
<div style="position:absolute;left:336px;top:114px;width:187.4px;height:543.6px;box-sizing:border-box;background:#fff;border:1px solid #b9b9b9;border-top-color:#cdcdcd;"></div>
<div style="position:absolute;left:337px;top:114.8px;width:16px;height:24.2px;box-sizing:border-box;background:#3d9bc4;"></div>
<span class="t" style="left:355.8px;top:121.7px;font-size:9.6px;line-height:13px;color:#595959;letter-spacing:-0.239px;">HOR1</span>
<div style="position:absolute;left:337px;top:138.8px;width:16px;height:24.2px;box-sizing:border-box;background:#c07c3e;"></div>
<span class="t" style="left:355.8px;top:145.7px;font-size:9.6px;line-height:13px;color:#595959;letter-spacing:-0.239px;">HOR2</span>
<div style="position:absolute;left:337px;top:162.8px;width:16px;height:24.2px;box-sizing:border-box;background:#4fc044;"></div>
<span class="t" style="left:355.8px;top:169.7px;font-size:9.6px;line-height:13px;color:#595959;letter-spacing:-0.239px;">HOR3</span>
<div style="position:absolute;left:473px;top:115px;width:1px;height:440px;box-sizing:border-box;background:#d4d4d4;"></div>
<div style="position:absolute;left:498px;top:115px;width:1px;height:440px;box-sizing:border-box;background:#d4d4d4;"></div>
<div style="position:absolute;left:337px;top:554.5px;width:186px;height:1px;box-sizing:border-box;background:#cfcfcf;"></div>
<svg class="a" style="left:476.5px;top:120.5px" width="20" height="16" viewBox="0 0 20 16">
<path d="M0.7 6.4C3 1.8 14.4 1.4 17.8 6.4 14.4 11.4 3 11 0.7 6.4z" fill="#fff" stroke="#111" stroke-width="0.9"/>
<circle cx="9.2" cy="5.6" r="4.5" fill="#4b86d8"/><circle cx="9.2" cy="5.9" r="2.1" fill="#060606"/>
<path d="M0.7 6.4C3 1.8 14.4 1.4 17.8 6.4" fill="none" stroke="#111" stroke-width="1.1"/><polygon points="11.6,6.7 15.2,6.7 17.8,9.2 17.8,13 15.2,15.5 11.6,15.5 9.1,13 9.1,9.2" fill="#d87630" stroke="#6a2c08" stroke-width="0.7"/></svg>
<svg class="a" style="left:476.5px;top:144.5px" width="20" height="16" viewBox="0 0 20 16">
<path d="M0.7 6.4C3 1.8 14.4 1.4 17.8 6.4 14.4 11.4 3 11 0.7 6.4z" fill="#fff" stroke="#111" stroke-width="0.9"/>
<circle cx="9.2" cy="5.6" r="4.5" fill="#4b86d8"/><circle cx="9.2" cy="5.9" r="2.1" fill="#060606"/>
<path d="M0.7 6.4C3 1.8 14.4 1.4 17.8 6.4" fill="none" stroke="#111" stroke-width="1.1"/><polygon points="11.6,6.7 15.2,6.7 17.8,9.2 17.8,13 15.2,15.5 11.6,15.5 9.1,13 9.1,9.2" fill="#d87630" stroke="#6a2c08" stroke-width="0.7"/></svg>
<svg class="a" style="left:476.5px;top:168.5px" width="20" height="16" viewBox="0 0 20 16">
<path d="M0.7 6.4C3 1.8 14.4 1.4 17.8 6.4 14.4 11.4 3 11 0.7 6.4z" fill="#fff" stroke="#111" stroke-width="0.9"/>
<circle cx="9.2" cy="5.6" r="4.5" fill="#4b86d8"/><circle cx="9.2" cy="5.9" r="2.1" fill="#060606"/>
<path d="M0.7 6.4C3 1.8 14.4 1.4 17.8 6.4" fill="none" stroke="#111" stroke-width="1.1"/><polygon points="11.6,6.7 15.2,6.7 17.8,9.2 17.8,13 15.2,15.5 11.6,15.5 9.1,13 9.1,9.2" fill="#d87630" stroke="#6a2c08" stroke-width="0.7"/></svg>
<svg class="a" style="left:501px;top:144.5px" width="20" height="16" viewBox="0 0 20 16">
<path d="M0.7 6.4C3 1.8 14.4 1.4 17.8 6.4 14.4 11.4 3 11 0.7 6.4z" fill="#fff" stroke="#111" stroke-width="0.9"/>
<circle cx="9.2" cy="5.6" r="4.5" fill="#4b86d8"/><circle cx="9.2" cy="5.9" r="2.1" fill="#060606"/>
<path d="M0.7 6.4C3 1.8 14.4 1.4 17.8 6.4" fill="none" stroke="#111" stroke-width="1.1"/><rect x="8.9" y="6.4" width="9.2" height="9" fill="#dc5fc6" stroke="#111" stroke-width="0.9"/></svg>
<svg class="a" style="left:501px;top:168.5px" width="20" height="16" viewBox="0 0 20 16">
<path d="M0.7 6.4C3 1.8 14.4 1.4 17.8 6.4 14.4 11.4 3 11 0.7 6.4z" fill="#fff" stroke="#111" stroke-width="0.9"/>
<circle cx="9.2" cy="5.6" r="4.5" fill="#4b86d8"/><circle cx="9.2" cy="5.9" r="2.1" fill="#060606"/>
<path d="M0.7 6.4C3 1.8 14.4 1.4 17.8 6.4" fill="none" stroke="#111" stroke-width="1.1"/><rect x="8.9" y="6.4" width="9.2" height="9" fill="#dc5fc6" stroke="#111" stroke-width="0.9"/></svg>
<svg class="a" style="left:501px;top:120px" width="20" height="15" viewBox="0 0 20 15">
<path d="M1.2 7.4C4 2.6 14.6 2.2 17.8 7.4 14.6 12.4 4 12 1.2 7.4z" fill="#fff" stroke="#222" stroke-width="0.9" stroke-dasharray="2.2 1.3"/>
<circle cx="9.6" cy="7.3" r="4.3" fill="#fff" stroke="#111" stroke-width="1"/><circle cx="9.6" cy="7.3" r="1.9" fill="#000"/></svg>
<span class="t" style="left:340.6px;top:563.9px;font-size:9px;line-height:12px;color:#000;letter-spacing:-0.377px;">Colormap</span>
<div style="position:absolute;left:410.3px;top:559.8px;width:108px;height:18px;box-sizing:border-box;background:#fff;border:1px solid #adadad;"></div>
<svg class="a" style="left:414.5px;top:562.5px" width="11" height="12" viewBox="0 0 11 12">
<path d="M3 5V2.4q0-1.7 2.5-1.7t2.5 1.7V5" fill="none" stroke="#333" stroke-width="1"/>
<rect x="1" y="5" width="9" height="6.4" fill="#fff" stroke="#222" stroke-width="1"/><rect x="4.3" y="7" width="2.4" height="3.2" fill="#222"/></svg>
<span class="t" style="left:429.5px;top:563.5px;font-size:9px;line-height:12px;color:#000;letter-spacing:0.050px;">Rainbow fit to [0,2</span>
<svg class="a" style="left:506.5px;top:566.5px" width="8" height="5" viewBox="0 0 8 5"><path d="M0.6 0.6l3.4 3.5 3.4-3.5" stroke="#444" stroke-width="1" fill="none"/></svg>
<span class="t" style="left:340.6px;top:588.5px;font-size:9px;line-height:12px;color:#000;letter-spacing:-0.717px;">Minimum</span>
<span class="t" style="left:340.6px;top:614.1px;font-size:9px;line-height:12px;color:#000;letter-spacing:-0.574px;">Maximum</span>
<div style="position:absolute;left:410.3px;top:583.4px;width:80.5px;height:20px;box-sizing:border-box;background:#fff;border:1px solid #8e8e8e;border-top-color:#7c7c7c;border-bottom-color:#a8a8a8;box-shadow:inset 0 0 0 1px #dedede;"></div>
<div style="position:absolute;left:477.3px;top:585.4px;width:11.5px;height:8px;box-sizing:border-box;background:#f0f0f0;border:1px solid #cfcfcf;"></div>
<div style="position:absolute;left:477.3px;top:593.4px;width:11.5px;height:8px;box-sizing:border-box;background:#f0f0f0;border:1px solid #cfcfcf;border-top:none;"></div>
<svg class="a" style="left:480.5px;top:588.0px" width="5" height="3.2" viewBox="0 0 6 4"><polygon points="0.3,3.6 3,0.4 5.7,3.6" fill="#111"/></svg>
<svg class="a" style="left:480.5px;top:595.8px" width="5" height="3.2" viewBox="0 0 6 4"><polygon points="0.3,0.4 3,3.6 5.7,0.4" fill="#111"/></svg>
<span class="t" style="left:413px;top:588.3px;font-size:9px;line-height:12px;color:#000;letter-spacing:-0.086px;">0,00 m</span>
<div style="position:absolute;left:496.8px;top:584.4px;width:20.6px;height:18px;box-sizing:border-box;background:#e1e1e1;border:1px solid #c4c4c4;"></div>
<svg class="a" style="left:500.3px;top:586.6px" width="14" height="14" viewBox="0 0 14 14">
<path d="M1 13l8-8.4" stroke="#3a3a3a" stroke-width="1.7" stroke-linecap="round"/><path d="M1.4 12.6l2.4-2.5" stroke="#111" stroke-width="1.9"/>
<g fill="#f2c21a"><polygon points="10.6,0.4 11.6,2.6 13.8,3 12.2,4.6 12.6,6.8 10.6,5.7 8.7,6.6 9.1,4.6 7.6,3 9.7,2.6"/>
<polygon points="4.6,1.6 5.3,3 6.8,3.2 5.7,4.2 6,5.6 4.6,5 3.3,5.6 3.6,4.2 2.5,3.2 4,3"/><polygon points="11.3,8 11.8,9 12.9,9.2 12.1,9.9 12.3,11 11.3,10.5 10.3,11 10.5,9.9 9.7,9.2 10.8,9"/></g></svg>
<div style="position:absolute;left:410.3px;top:608.6px;width:80.5px;height:20px;box-sizing:border-box;background:#fff;border:1px solid #8e8e8e;border-top-color:#7c7c7c;border-bottom-color:#a8a8a8;box-shadow:inset 0 0 0 1px #dedede;"></div>
<div style="position:absolute;left:477.3px;top:610.6px;width:11.5px;height:8px;box-sizing:border-box;background:#f0f0f0;border:1px solid #cfcfcf;"></div>
<div style="position:absolute;left:477.3px;top:618.6px;width:11.5px;height:8px;box-sizing:border-box;background:#f0f0f0;border:1px solid #cfcfcf;border-top:none;"></div>
<svg class="a" style="left:480.5px;top:613.2px" width="5" height="3.2" viewBox="0 0 6 4"><polygon points="0.3,3.6 3,0.4 5.7,3.6" fill="#111"/></svg>
<svg class="a" style="left:480.5px;top:621.0px" width="5" height="3.2" viewBox="0 0 6 4"><polygon points="0.3,0.4 3,3.6 5.7,0.4" fill="#111"/></svg>
<span class="t" style="left:413px;top:613.5px;font-size:9px;line-height:12px;color:#000;letter-spacing:-0.170px;">2300,00 m</span>
<div style="position:absolute;left:496.8px;top:609.6px;width:20.6px;height:18px;box-sizing:border-box;background:#e1e1e1;border:1px solid #c4c4c4;"></div>
<svg class="a" style="left:500.3px;top:611.8000000000001px" width="14" height="14" viewBox="0 0 14 14">
<path d="M1 13l8-8.4" stroke="#3a3a3a" stroke-width="1.7" stroke-linecap="round"/><path d="M1.4 12.6l2.4-2.5" stroke="#111" stroke-width="1.9"/>
<g fill="#f2c21a"><polygon points="10.6,0.4 11.6,2.6 13.8,3 12.2,4.6 12.6,6.8 10.6,5.7 8.7,6.6 9.1,4.6 7.6,3 9.7,2.6"/>
<polygon points="4.6,1.6 5.3,3 6.8,3.2 5.7,4.2 6,5.6 4.6,5 3.3,5.6 3.6,4.2 2.5,3.2 4,3"/><polygon points="11.3,8 11.8,9 12.9,9.2 12.1,9.9 12.3,11 11.3,10.5 10.3,11 10.5,9.9 9.7,9.2 10.8,9"/></g></svg>
<div style="position:absolute;left:342px;top:635.7px;width:62.5px;height:16.3px;box-sizing:border-box;background:#e1e1e1;border:1px solid #adadad;"></div>
<span class="t" style="left:346.5px;top:639.1px;font-size:8px;line-height:10px;color:#333;letter-spacing:-0.922px;">&gt;&gt;</span>
<span class="t" style="left:358.5px;top:638.5px;font-size:9px;line-height:12px;color:#000;letter-spacing:-0.276px;">Revisualize</span>
<svg class="a" style="left:528px;top:114px" width="482" height="544" viewBox="528 114 482 544">
<defs>
<clipPath id="cg"><polygon points="531.4,237.6 545,236.5 560.6,235.5 565.7,240.6 575,240 596,238 606,230 617.3,230.3 631,227.6 644.7,225.5 658.4,224.1 672,223.5 683,221.4 695.3,218 706.2,219.4 718.5,221.4 737.2,222.6 766.5,225.2 787,228.2 807.5,229.6 839.7,232.5 845.6,234.9 891.5,274.8 920,295.5 1010,356 1010,433 941.6,468.6 917,479.1 899.4,470.3 871.3,458 836.1,445.7 801,435.2 765.8,423.9 730.6,412.3 695.5,400 616.5,369 605,360 596,342 581,319 555.5,286 545.4,268.6 539,251"/></clipPath>
<clipPath id="cr"><polygon points="536.5,286.3 558,285 1010,444 1010,473 941.6,516 906.5,532 879,546 860.7,531.9 836.1,519.5 801,505.5 765.8,494.9 730.6,483.7 695.5,468.6 660.3,452.7 618.4,433.5 607.8,424 604.2,414.5 592.4,395.6 582.9,376.6 573.4,364.8 561.5,345.8 554.4,324.5 550.9,304.4 543.8,302"/></clipPath>
<filter id="b2" x="-20%" y="-20%" width="140%" height="140%"><feGaussianBlur stdDeviation="1.1"/></filter>
<filter id="b1" x="-20%" y="-20%" width="140%" height="140%"><feGaussianBlur stdDeviation="1"/></filter>
<filter id="b4" x="-20%" y="-20%" width="140%" height="140%"><feGaussianBlur stdDeviation="4"/></filter>
<filter id="tex" x="0" y="0" width="100%" height="100%" color-interpolation-filters="sRGB">
<feTurbulence type="fractalNoise" baseFrequency="0.07 0.13" numOctaves="3" seed="7" result="n"/>
<feDiffuseLighting in="n" surfaceScale="1.5" diffuseConstant="1.14" lighting-color="#fff" result="l"><feDistantLight azimuth="235" elevation="50"/></feDiffuseLighting>
<feComposite in="l" in2="SourceGraphic" operator="in"/>
</filter>
<linearGradient id="gg" gradientUnits="userSpaceOnUse" x1="900" y1="235" x2="760" y2="470"><stop offset="0" stop-color="#84ac4c"/><stop offset="0.3" stop-color="#95c256"/><stop offset="0.65" stop-color="#a2d25e"/><stop offset="1" stop-color="#acdc66"/></linearGradient>
<linearGradient id="rg" gradientUnits="userSpaceOnUse" x1="600" y1="330" x2="900" y2="540"><stop offset="0" stop-color="#e20c0c"/><stop offset="0.6" stop-color="#d60a0a"/><stop offset="1" stop-color="#bc0808"/></linearGradient>
<radialGradient id="bd"><stop offset="0" stop-color="#6fc0e6"/><stop offset="0.6" stop-color="#3d9ccc"/><stop offset="1" stop-color="#2a7fae"/></radialGradient>
</defs>
<rect x="528" y="114" width="482" height="544" fill="#000"/>
<!-- red layer -->
<g clip-path="url(#cr)">
<rect x="528" y="280" width="482" height="280" fill="url(#rg)"/>

<g filter="url(#b1)">
<path d="M637 372l-14 56" stroke="#6a0606" stroke-width="3.2" stroke-dasharray="3 1.6"/>
<path d="M641 373l-14 56" stroke="#e42020" stroke-width="1.6" opacity=".7"/>
<path d="M557 306l4 22 8 20" stroke="#7a0606" stroke-width="4" fill="none" opacity=".55"/>
<ellipse cx="552.5" cy="297.5" rx="4" ry="5.6" fill="#d67a26"/>

<path d="M760 500l120 50 130-70" stroke="#7e0606" stroke-width="10" fill="none" opacity=".45"/>
</g>
<g style="mix-blend-mode:multiply" opacity=".8"><rect x="400" y="160" width="760" height="520" fill="#808080" filter="url(#tex)" transform="rotate(22 770 420)"/></g>
</g>
<!-- green layer -->
<g clip-path="url(#cg)">
<rect x="528" y="210" width="482" height="280" fill="url(#gg)"/>
<g filter="url(#b2)">
<!-- yellow zones -->
<path d="M528 232L606 228 601 243 597 300 616 327 647 337 672 350 698 362 721 378 731 386 739 401 736 412 700 405 616 372 600 362 528 260z" fill="#c8d24a"/>
<path d="M600 226l50-2 48-10 16 6 50 2 40 4 10 8-8 6-20-4-14 2-24-6-20 4-14-10-12 4-10 14-10-2 2-12-20 2-28 8-30 2z" fill="#d4dc4c"/>
<path d="M531 236l30-2 6 6 28-2-2 10-30 8-24-2z" fill="#dde456"/>
<!-- lighter bluish green left of fault -->
<path d="M600 247l12-4 24 1 16 3-6 23-8 22-12 22-10 10-10-6-8-22z" fill="#9bd46e"/>
<!-- darker right slope -->
<path d="M846 235L892 275 920 296 1010 356 1010 380 960 348 905 308 862 268 836 238z" fill="#84aa4a" opacity=".8"/>

<!-- teal patches -->
<path d="M626 274l6-15 6-10 11-2-2 12-3 12-5 16-8 1-5-7z" fill="#6cb098"/>
<path d="M678 266l12 1 10 5 4 12-6 4-8 4-12 0 0-8-10-6 6-4z" fill="#78ba9a"/>
<path d="M850 324L863 314.7 871 313.4 881 321 894 329 915 334 935 340.5 956 349.5 976.5 357.3 1000 365 1010 368 1010 371.4 971 371.5 949 375 934 373.4 912 366.7 904 360 889 355 873 354.7 863 352 855 347 849 334z" fill="#78bc98"/>
<!-- bright ridge lower right -->
<path d="M900 388L935 378 960 377.5 1010 372 1010 399 979 398.5 966 402 945 406 915 402z" fill="#b8e878"/>
<path d="M948 411L967 404.5 979 400 1010 402 1010 436 950 436z" fill="#d2d94e"/>
</g>
<!-- fault & ridge lines -->
<g filter="url(#b1)" fill="none">
<path d="M651 248c-2 12-3 20-6 31-3 9-8 16-13 22-4 6-7 12-10 18" stroke="#4a6428" stroke-width="4.6"/><path d="M653 249c-2 12-3 20-6 31-3 9-8 16-13 22-4 6-7 12-10 18" stroke="#141e0a" stroke-width="2.6" stroke-dasharray="2.2 1.4"/>
<path d="M657 250c-2 12-3 20-6 31" stroke="#b5dc80" stroke-width="2.2" opacity=".8"/>
<path d="M606 232c16 0 30 2 40-2 10-4 20-4 30-8 8-2 14-6 22-4" stroke="#7d8f30" stroke-width="2"/>
<path d="M652 246c8-5 14-9 22-13 8-4 14-8 20-12" stroke="#9ed26a" stroke-width="8"/><path d="M656 249c8-6 16-10 24-14 6-4 10-8 15-13" stroke="#3c5420" stroke-width="2.6"/><path d="M648 240c10-5 22-10 40-18" stroke="#b8e480" stroke-width="2"/>
<path d="M640 236l24-7M646 240l22-8" stroke="#cfe08a" stroke-width="1.4"/>
<path d="M697 218l-6 12-8 6" stroke="#5f7a2c" stroke-width="2.2"/>
<path d="M560 236l6 6" stroke="#7b8a30" stroke-width="2.5"/>
<path d="M540 258l22-4" stroke="#d8a040" stroke-width="1.6" opacity=".7"/>

</g>
<g style="mix-blend-mode:multiply"><rect x="400" y="60" width="760" height="560" fill="#808080" filter="url(#tex)" transform="rotate(24 770 350)"/></g>
<!-- orange dots -->
<g fill="#d86a3a" stroke="#7a3a1a" stroke-width="0.4">
<circle cx="642.9" cy="256.6" r="1.6"/><circle cx="660.4" cy="265.4" r="1.5"/><circle cx="662.5" cy="267.7" r="1.5"/><circle cx="696.2" cy="235.5" r="1.4"/>
<circle cx="669.8" cy="292" r="1.6"/><circle cx="753.9" cy="252.8" r="1.4"/><circle cx="746.6" cy="260.4" r="1.4"/><circle cx="756.2" cy="270.3" r="1.4"/>
<circle cx="775" cy="267.4" r="1.4"/><circle cx="828" cy="283.8" r="1.4"/><circle cx="860.3" cy="292.3" r="1.4"/><circle cx="834.2" cy="333.3" r="1.7"/>
<circle cx="866.5" cy="332.8" r="1.6"/><circle cx="866.7" cy="345.7" r="1.6"/><circle cx="976" cy="363.2" r="1.5"/>
</g>
</g>
<!-- blue dots -->
<g fill="url(#bd)">
<circle cx="704.1" cy="155.8" r="1.9"/><circle cx="666.3" cy="181.6" r="2"/><circle cx="664.8" cy="186" r="1.9"/><circle cx="645.8" cy="190.4" r="2"/>
<circle cx="667.5" cy="191.8" r="2"/><circle cx="675.4" cy="215.8" r="2.2"/><circle cx="766.2" cy="184.2" r="1.9"/><circle cx="758.6" cy="190" r="1.9"/>
<circle cx="768.8" cy="200.6" r="2"/><circle cx="789.3" cy="198.8" r="1.9"/><circle cx="847" cy="216.4" r="2"/><circle cx="882.2" cy="224" r="2"/>
<circle cx="856.7" cy="261" r="2.2"/><circle cx="891.3" cy="263.3" r="2.2"/><circle cx="892.5" cy="275" r="2.3"/><circle cx="1009" cy="296.7" r="1.6"/>
</g>
</svg>

<div style="position:absolute;left:942.7px;top:411.2px;width:62.3px;height:239.4px;box-sizing:border-box;background:#000;border:1px solid #d8d8d8;"></div>
<span class="t" style="left:953.8px;top:423.3px;font-size:9px;line-height:12px;color:#fff;letter-spacing:-0.168px;">Depth (m)</span>
<div style="position:absolute;left:954.7px;top:445px;width:12.5px;height:22.6px;box-sizing:border-box;background:#d60000;"></div>
<div style="position:absolute;left:954.7px;top:467.6px;width:12.5px;height:17.4px;box-sizing:border-box;background:#e0701e;"></div>
<div style="position:absolute;left:954.7px;top:485px;width:12.5px;height:18.5px;box-sizing:border-box;background:#f0c431;"></div>
<div style="position:absolute;left:954.7px;top:503.5px;width:12.5px;height:17.5px;box-sizing:border-box;background:#d8e24a;"></div>
<div style="position:absolute;left:954.7px;top:521px;width:12.5px;height:17.4px;box-sizing:border-box;background:#a4d65e;"></div>
<div style="position:absolute;left:954.7px;top:538.4px;width:12.5px;height:17.9px;box-sizing:border-box;background:#8cc98c;"></div>
<div style="position:absolute;left:954.7px;top:556.3px;width:12.5px;height:17.3px;box-sizing:border-box;background:#6fa2c9;"></div>
<div style="position:absolute;left:954.7px;top:573.6px;width:12.5px;height:18.6px;box-sizing:border-box;background:#4c8dfe;"></div>
<div style="position:absolute;left:954.7px;top:592.2px;width:12.5px;height:17.2px;box-sizing:border-box;background:#2ebffc;"></div>
<div style="position:absolute;left:954.7px;top:609.4px;width:12.5px;height:22.6px;box-sizing:border-box;background:#00f6fb;"></div>
<div style="position:absolute;left:954.7px;top:467.1px;width:12.5px;height:1px;box-sizing:border-box;background:rgba(255,255,255,.8);"></div>
<div style="position:absolute;left:954.7px;top:484.5px;width:12.5px;height:1px;box-sizing:border-box;background:rgba(255,255,255,.8);"></div>
<div style="position:absolute;left:954.7px;top:503.0px;width:12.5px;height:1px;box-sizing:border-box;background:rgba(255,255,255,.8);"></div>
<div style="position:absolute;left:954.7px;top:520.5px;width:12.5px;height:1px;box-sizing:border-box;background:rgba(255,255,255,.8);"></div>
<div style="position:absolute;left:954.7px;top:537.9px;width:12.5px;height:1px;box-sizing:border-box;background:rgba(255,255,255,.8);"></div>
<div style="position:absolute;left:954.7px;top:555.8px;width:12.5px;height:1px;box-sizing:border-box;background:rgba(255,255,255,.8);"></div>
<div style="position:absolute;left:954.7px;top:573.1px;width:12.5px;height:1px;box-sizing:border-box;background:rgba(255,255,255,.8);"></div>
<div style="position:absolute;left:954.7px;top:591.7px;width:12.5px;height:1px;box-sizing:border-box;background:rgba(255,255,255,.8);"></div>
<div style="position:absolute;left:954.7px;top:608.9px;width:12.5px;height:1px;box-sizing:border-box;background:rgba(255,255,255,.8);"></div>
<div style="position:absolute;left:954.7px;top:449px;width:12.5px;height:1px;box-sizing:border-box;background:#f08a8a;"></div>
<div style="position:absolute;left:954.7px;top:626.8px;width:12.5px;height:1px;box-sizing:border-box;background:#b8ffff;"></div>
<div style="position:absolute;left:954.7px;top:437.3px;width:12.5px;height:8px;box-sizing:border-box;background:repeating-linear-gradient(#e02020 0,#e02020 1.2px,#fff 1.2px,#fff 2.2px,#e02020 2.2px,#e02020 3.3px,#000 3.3px,#000 4px);"></div>
<div style="position:absolute;left:954.7px;top:632px;width:12.5px;height:8px;box-sizing:border-box;background:repeating-linear-gradient(#000 0,#000 1px,#20f0f0 1px,#20f0f0 2.6px,#fff 2.6px,#fff 3.4px,#000 3.4px,#000 4px);"></div>
<span class="t" style="left:970.8px;top:444.4px;font-size:9px;line-height:12px;color:#fff;letter-spacing:-0.508px;">2300</span>
<span class="t" style="left:970.8px;top:462.2px;font-size:9px;line-height:12px;color:#fff;letter-spacing:-0.508px;">2070</span>
<span class="t" style="left:970.8px;top:479.9px;font-size:9px;line-height:12px;color:#fff;letter-spacing:-0.508px;">1840</span>
<span class="t" style="left:970.8px;top:497.7px;font-size:9px;line-height:12px;color:#fff;letter-spacing:-0.508px;">1610</span>
<span class="t" style="left:970.8px;top:515.5px;font-size:9px;line-height:12px;color:#fff;letter-spacing:-0.508px;">1380</span>
<span class="t" style="left:970.8px;top:533.2px;font-size:9px;line-height:12px;color:#fff;letter-spacing:-0.340px;">1150</span>
<span class="t" style="left:970.8px;top:551.0px;font-size:9px;line-height:12px;color:#fff;letter-spacing:-0.410px;">920</span>
<span class="t" style="left:970.8px;top:568.8px;font-size:9px;line-height:12px;color:#fff;letter-spacing:-0.410px;">690</span>
<span class="t" style="left:970.8px;top:586.6px;font-size:9px;line-height:12px;color:#fff;letter-spacing:-0.410px;">460</span>
<span class="t" style="left:970.8px;top:604.3px;font-size:9px;line-height:12px;color:#fff;letter-spacing:-0.410px;">230</span>
<span class="t" style="left:970.8px;top:622.1px;font-size:9px;line-height:12px;color:#fff;letter-spacing:-0.416px;">0</span>
</body></html>
